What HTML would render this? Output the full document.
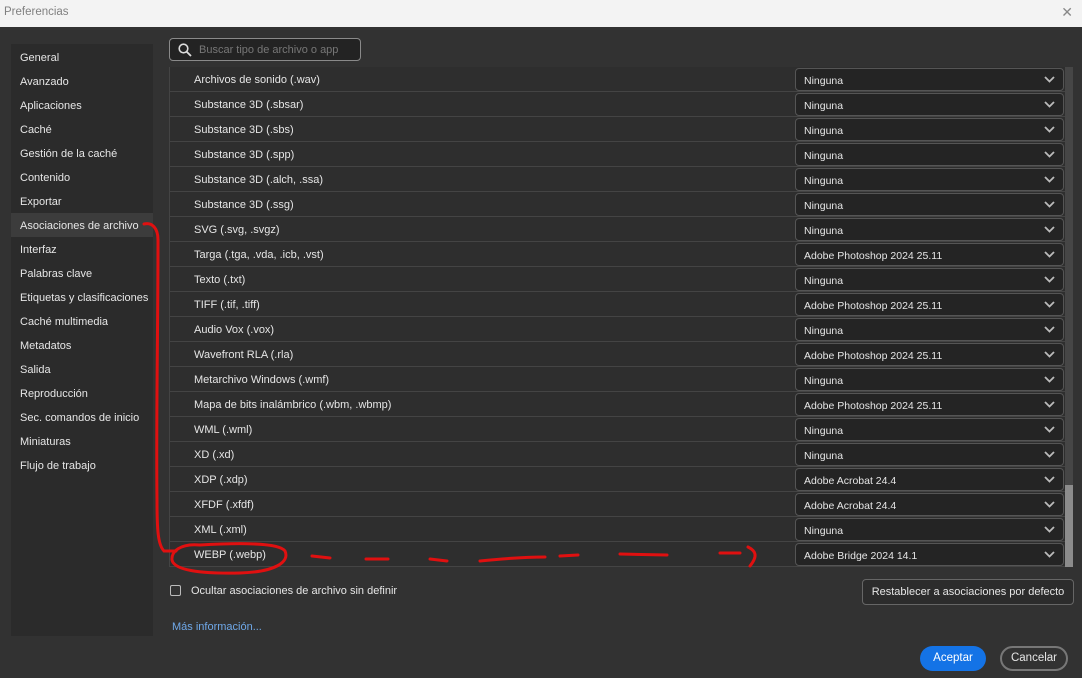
<!DOCTYPE html>
<html><head><meta charset="utf-8"><style>
*{margin:0;padding:0;box-sizing:border-box}
body{width:1082px;height:678px;background:#323232;font-family:"Liberation Sans",sans-serif;font-size:12px;color:#e6e6e6;position:relative;overflow:hidden}
.title{position:absolute;left:0;top:0;width:1082px;height:27px;background:#f3f3f3;color:#808080;font-size:11.5px;padding:6px 0 0 4px}
.close{position:absolute;right:9px;top:4px;color:#888;font-size:14px}
.side{position:absolute;left:11px;top:44px;width:142px;height:592px;background:#2b2b2b}
.side div{height:24px;line-height:26px;padding-left:9px;font-size:11px;white-space:nowrap}
.side .sel{background:#3c3c3c}
.search{position:absolute;left:169px;top:38px;width:192px;height:23px;border:1px solid #8a8a8a;border-radius:4px;background:#232323;color:#777;font-size:11px;padding:5px 0 0 29px}
.table{position:absolute;left:169px;top:67px;width:897px;height:500px;border-left:1px solid #444;background:#2e2e2e}
.row{height:25px;border-bottom:1px solid #444;position:relative}
.row .n{position:absolute;left:24px;top:7px;font-size:11px;white-space:nowrap}
.dd{position:absolute;left:625px;top:1px;width:269px;height:23px;background:#242424;border:1px solid #555;border-radius:4px;font-size:10.5px;padding:6px 0 0 8px}
.dd svg{position:absolute;right:8px;top:7px}
.sb{position:absolute;left:1065px;top:67px;width:8px;height:500px;background:#464646}
.thumb{position:absolute;left:1065px;top:485px;width:8px;height:82px;background:#8c8c8c}
.btn{position:absolute;border-radius:16px;font-size:11.5px;text-align:center}
</style></head><body>
<div class="title">Preferencias<span class="close">✕</span></div>
<div class="side">
<div style="margin-top:1px">General</div><div>Avanzado</div><div>Aplicaciones</div><div>Caché</div><div>Gestión de la caché</div><div>Contenido</div><div>Exportar</div><div class="sel">Asociaciones de archivo</div><div>Interfaz</div><div>Palabras clave</div><div>Etiquetas y clasificaciones</div><div>Caché multimedia</div><div>Metadatos</div><div>Salida</div><div>Reproducción</div><div>Sec. comandos de inicio</div><div>Miniaturas</div><div>Flujo de trabajo</div>
</div>
<div class="search"><svg style="position:absolute;left:8px;top:4px" width="14" height="14" viewBox="0 0 14 14"><circle cx="5.5" cy="5.5" r="4.3" fill="none" stroke="#ddd" stroke-width="1.6"/><path d="M8.7 8.7L13 13" stroke="#ddd" stroke-width="1.8"/></svg>Buscar tipo de archivo o app</div>
<div class="table" id="t"></div>
<div class="sb"></div><div class="thumb"></div>
<div style="position:absolute;left:170px;top:585px;width:11px;height:11px;border:1.5px solid #bbb;border-radius:2px"></div>
<div style="position:absolute;left:191px;top:585px;font-size:11px">Ocultar asociaciones de archivo sin definir</div>
<div class="btn" style="left:862px;top:579px;width:212px;height:26px;border:1px solid #666;border-radius:4px;background:#2c2c2c;line-height:24px;font-size:11px">Restablecer a asociaciones por defecto</div>
<div style="position:absolute;left:172px;top:621px;color:#6fa8e8;font-size:11px">Más información...</div>
<div class="btn" style="left:920px;top:646px;width:66px;height:25px;background:#1473e6;color:#fff;line-height:25px">Aceptar</div>
<div class="btn" style="left:1000px;top:646px;width:68px;height:25px;border:2px solid #777;line-height:21px">Cancelar</div>
<svg style="position:absolute;left:0;top:0" width="1082" height="678"><g fill="none" stroke="#e01010" stroke-width="3" stroke-linecap="round">
<path d="M144 224 C152 222 158 228 158 240 C158 330 156 420 157 500 C157 530 158 545 164 551 L176 551"/>
<path d="M200 545 C180 543 171 552 172 560 C174 570 200 574 240 573 C275 572 290 562 285 551 C280 544 250 542 200 545"/>
<path d="M312 556 L330 558"/><path d="M366 559 L388 559"/><path d="M430 559 L447 561"/><path d="M480 561 C500 559 525 557 545 557"/><path d="M560 556 L578 555"/><path d="M620 554 L667 555"/><path d="M720 553 L740 553"/><path d="M748 547 C756 551 758 556 750 566"/></g></svg>
<script>
var r=[["Archivos de sonido (.wav)","Ninguna"],["Substance 3D (.sbsar)","Ninguna"],["Substance 3D (.sbs)","Ninguna"],["Substance 3D (.spp)","Ninguna"],["Substance 3D (.alch, .ssa)","Ninguna"],["Substance 3D (.ssg)","Ninguna"],["SVG (.svg, .svgz)","Ninguna"],["Targa (.tga, .vda, .icb, .vst)","Adobe Photoshop 2024 25.11"],["Texto (.txt)","Ninguna"],["TIFF (.tif, .tiff)","Adobe Photoshop 2024 25.11"],["Audio Vox (.vox)","Ninguna"],["Wavefront RLA (.rla)","Adobe Photoshop 2024 25.11"],["Metarchivo Windows (.wmf)","Ninguna"],["Mapa de bits inalámbrico (.wbm, .wbmp)","Adobe Photoshop 2024 25.11"],["WML (.wml)","Ninguna"],["XD (.xd)","Ninguna"],["XDP (.xdp)","Adobe Acrobat 24.4"],["XFDF (.xfdf)","Adobe Acrobat 24.4"],["XML (.xml)","Ninguna"],["WEBP (.webp)","Adobe Bridge 2024 14.1"]];
var h="";r.forEach(function(x){h+='<div class="row"><span class="n">'+x[0]+'</span><div class="dd">'+x[1]+'<svg width="11" height="7" viewBox="0 0 11 7"><path d="M1 1L5.5 5.5L10 1" fill="none" stroke="#bbb" stroke-width="1.8"/></svg></div></div>'});
document.getElementById("t").innerHTML=h;
</script>
</body></html>
